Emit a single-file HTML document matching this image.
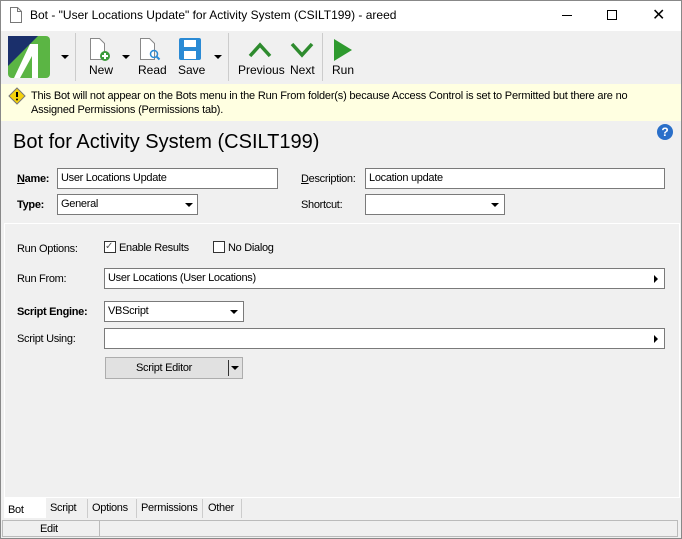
<!DOCTYPE html>
<html><head><style>
*{margin:0;padding:0;box-sizing:border-box}
body{width:682px;height:539px;overflow:hidden;background:#f0f0f0;font-family:"Liberation Sans",sans-serif;font-size:11px;color:#000;position:relative}
.a{position:absolute}
.in{position:absolute;background:#fff;border:1px solid #7a7a7a;padding:0 3px;line-height:19px;font-size:11px;letter-spacing:-.3px;white-space:nowrap}
.lb{position:absolute;font-size:11px;letter-spacing:-.3px;white-space:nowrap}
.tri{position:absolute;width:0;height:0;border-left:4px solid transparent;border-right:4px solid transparent;border-top:4px solid #000}
.rt{position:absolute;width:0;height:0;border-top:4px solid transparent;border-bottom:4px solid transparent;border-left:4px solid #000}
.tb{position:absolute;font-size:12px;top:63px}
</style></head><body>
<div class="a" style="left:0;top:0;width:682px;height:539px;border:1px solid #888"></div>
<div class="a" style="left:1px;top:1px;width:680px;height:30px;background:#fff"></div>
<svg class="a" style="left:10px;top:7px" width="12" height="16"><path d="M.5 .5h7l4 4v11H.5z M7.5 .5v4h4" fill="#fff" stroke="#777"/></svg>
<div class="lb" style="left:30px;top:8px;font-size:12px;letter-spacing:0">Bot - "User Locations Update" for Activity System (CSILT199) - areed</div>
<div class="a" style="left:562px;top:15px;width:10px;height:1px;background:#000"></div>
<div class="a" style="left:607px;top:10px;width:10px;height:10px;border:1px solid #000"></div>
<div class="lb" style="left:652px;top:5px;font-size:16px">✕</div>
<svg class="a" style="left:8px;top:36px" width="42" height="42"><rect width="42" height="42" rx="4" fill="#5bb544"/><path d="M0 0h30l-30 30z" fill="#1a2f6b"/><path d="M6 42 22 8h8v34h-6V20L12 42z" fill="#fff"/></svg>
<div class="tri" style="left:61px;top:55px"></div>
<div class="a" style="left:75px;top:33px;width:1px;height:48px;background:#ccc"></div>
<svg class="a" style="left:90px;top:38px" width="24" height="24"><path d="M.5 .5h9l5 5v16H.5z" fill="#fff" stroke="#888"/><circle cx="15" cy="18" r="5" fill="#3a9a3a"/><path d="M12 18h6M15 15v6" stroke="#fff" stroke-width="2"/></svg>
<div class="tri" style="left:122px;top:55px"></div>
<svg class="a" style="left:140px;top:38px" width="24" height="24"><path d="M.5 .5h9l5 5v16H.5z" fill="#fff" stroke="#888"/><circle cx="14" cy="16" r="3.5" fill="none" stroke="#2a8ad4" stroke-width="1.5"/><path d="M16.5 18.5l3 3" stroke="#2a8ad4" stroke-width="2"/></svg>
<svg class="a" style="left:179px;top:38px" width="24" height="24"><rect x="0" y="0" width="22" height="22" rx="2" fill="#2a8ad4"/><rect x="5" y="2" width="12" height="7" fill="#fff"/><rect x="5" y="13" width="12" height="8" fill="#fff"/></svg>
<div class="tri" style="left:214px;top:55px"></div>
<div class="a" style="left:228px;top:33px;width:1px;height:48px;background:#ccc"></div>
<svg class="a" style="left:248px;top:42px" width="24" height="16"><path d="M2 14 12 3l10 11" fill="none" stroke="#2e8b2e" stroke-width="3.5"/></svg>
<svg class="a" style="left:290px;top:42px" width="24" height="16"><path d="M2 2l10 11L22 2" fill="none" stroke="#2e8b2e" stroke-width="3.5"/></svg>
<div class="a" style="left:322px;top:33px;width:1px;height:48px;background:#ccc"></div>
<svg class="a" style="left:334px;top:39px" width="18" height="22"><path d="M0 0l18 11L0 22z" fill="#2e9a2e"/></svg>
<div class="tb" style="left:89px">New</div>
<div class="tb" style="left:138px">Read</div>
<div class="tb" style="left:178px">Save</div>
<div class="tb" style="left:238px">Previous</div>
<div class="tb" style="left:290px">Next</div>
<div class="tb" style="left:332px">Run</div>
<div class="a" style="left:1px;top:84px;width:680px;height:37px;background:#ffffe1"></div>
<svg class="a" style="left:8px;top:87px" width="18" height="18"><path d="M9 1l8 8-8 8-8-8z" fill="#f5d20a" stroke="#777"/><path d="M9 5v5" stroke="#000" stroke-width="2"/><circle cx="9" cy="12.5" r="1" fill="#000"/></svg>
<div class="lb" style="left:31px;top:89px;line-height:14px;letter-spacing:-.2px">This Bot will not appear on the Bots menu in the Run From folder(s) because Access Control is set to Permitted but there are no<br>Assigned Permissions (Permissions tab).</div>
<div class="lb" style="left:13px;top:131px;font-size:20px;letter-spacing:0">Bot for Activity System (CSILT199)</div>
<div class="a" style="left:657px;top:124px;width:16px;height:16px;border-radius:50%;background:#2a6fc9;color:#fff;font-weight:bold;font-size:12px;text-align:center;line-height:16px">?</div>
<div class="lb" style="left:17px;top:173px;font-weight:bold"><u>N</u>ame:</div>
<div class="in" style="left:57px;top:168px;width:221px;height:21px">User Locations Update</div>
<div class="lb" style="left:301px;top:173px"><u>D</u>escription:</div>
<div class="in" style="left:365px;top:168px;width:300px;height:21px">Location update</div>
<div class="lb" style="left:17px;top:199px;font-weight:bold">Type:</div>
<div class="in" style="left:57px;top:194px;width:141px;height:21px">General</div><div class="tri" style="left:185px;top:203px"></div>
<div class="lb" style="left:301px;top:199px">Shortcut:</div>
<div class="in" style="left:365px;top:194px;width:140px;height:21px"></div><div class="tri" style="left:491px;top:203px"></div>
<div class="a" style="left:4px;top:223px;width:676px;height:275px;border:1px solid #fff;background:#f0f0f0"></div>
<div class="lb" style="left:17px;top:243px">Run Options:</div>
<div class="a" style="left:104px;top:241px;width:12px;height:12px;border:1px solid #333;background:#fff;font-size:10px;line-height:10px;color:#555">✓</div>
<div class="lb" style="left:119px;top:242px">Enable Results</div>
<div class="a" style="left:213px;top:241px;width:12px;height:12px;border:1px solid #333;background:#fff"></div>
<div class="lb" style="left:228px;top:242px">No Dialog</div>
<div class="lb" style="left:17px;top:273px">Run From:</div>
<div class="in" style="left:104px;top:268px;width:561px;height:21px">User Locations (User Locations)</div><div class="rt" style="left:654px;top:275px"></div>
<div class="lb" style="left:17px;top:306px;font-weight:bold">Script Engine:</div>
<div class="in" style="left:104px;top:301px;width:140px;height:21px">VBScript</div><div class="tri" style="left:230px;top:310px"></div>
<div class="lb" style="left:17px;top:333px">Script Using:</div>
<div class="in" style="left:104px;top:328px;width:561px;height:21px"></div><div class="rt" style="left:654px;top:335px"></div>
<div class="a" style="left:105px;top:357px;width:138px;height:22px;border:1px solid #adadad;background:#e1e1e1"></div>
<div class="lb" style="left:136px;top:362px">Script Editor</div>
<div class="a" style="left:228px;top:360px;width:1px;height:16px;background:#333"></div>
<div class="tri" style="left:231px;top:366px"></div>
<div class="a" style="left:4px;top:498px;width:42px;height:20px;background:#fff"></div>
<div class="lb" style="left:8px;top:504px">Bot</div>
<div class="lb" style="left:50px;top:502px">Script</div>
<div class="a" style="left:87px;top:499px;width:1px;height:19px;background:#ccc"></div>
<div class="lb" style="left:92px;top:502px">Options</div>
<div class="a" style="left:136px;top:499px;width:1px;height:19px;background:#ccc"></div>
<div class="lb" style="left:141px;top:502px">Permissions</div>
<div class="a" style="left:202px;top:499px;width:1px;height:19px;background:#ccc"></div>
<div class="lb" style="left:208px;top:502px">Other</div>
<div class="a" style="left:241px;top:499px;width:1px;height:19px;background:#ccc"></div>
<div class="a" style="left:78px;top:520px;width:600px;height:17px;border:1px solid #bbb"></div>
<div class="a" style="left:2px;top:520px;width:98px;height:17px;border:1px solid #bbb;background:#f0f0f0"></div>
<div class="lb" style="left:40px;top:523px">Edit</div>
</body></html>
